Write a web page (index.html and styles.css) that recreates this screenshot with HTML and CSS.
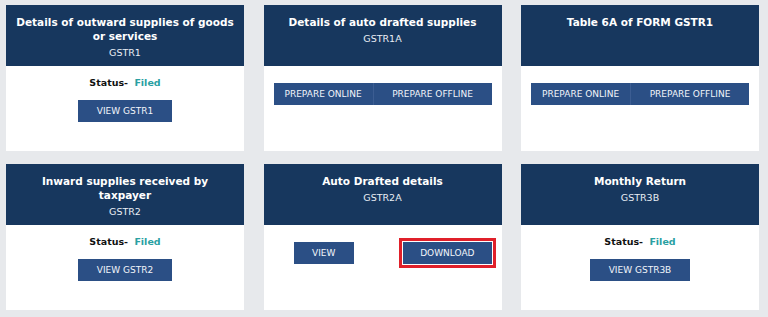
FILE: index.html
```html
<!DOCTYPE html>
<html lang="en">

<head>
    <meta charset="utf-8" />
    <title>Returns Dashboard</title>
    <link rel="stylesheet" href="styles.css">
</head>

<body>
    <div class="Dashboard">
        <div class="Tile">
            <div class="TileHeader">
                <div class="TileTitle">Details of outward supplies of goods or services</div>
                <div class="TileForm">GSTR1</div>
            </div>
            <div class="TileBody">
                <div class="Status">Status- <span class="Filed">Filed</span></div>
                <button class="Btn">VIEW GSTR1</button>
            </div>
        </div>
        <div class="Tile">
            <div class="TileHeader">
                <div class="TileTitle">Details of auto drafted supplies</div>
                <div class="TileForm">GSTR1A</div>
            </div>
            <div class="TileBody TileBody--actions">
                <div class="BtnGroup">
                    <button class="Btn BtnGroupFirst">PREPARE ONLINE</button>
                    <button class="Btn BtnGroupLast">PREPARE OFFLINE</button>
                </div>
            </div>
        </div>
        <div class="Tile">
            <div class="TileHeader">
                <div class="TileTitle">Table 6A of FORM GSTR1</div>
            </div>
            <div class="TileBody TileBody--actions">
                <div class="BtnGroup">
                    <button class="Btn BtnGroupFirst">PREPARE ONLINE</button>
                    <button class="Btn BtnGroupLast">PREPARE OFFLINE</button>
                </div>
            </div>
        </div>
        <div class="Tile">
            <div class="TileHeader">
                <div class="TileTitle">Inward supplies received by taxpayer</div>
                <div class="TileForm">GSTR2</div>
            </div>
            <div class="TileBody">
                <div class="Status">Status- <span class="Filed">Filed</span></div>
                <button class="Btn">VIEW GSTR2</button>
            </div>
        </div>
        <div class="Tile">
            <div class="TileHeader">
                <div class="TileTitle">Auto Drafted details</div>
                <div class="TileForm">GSTR2A</div>
            </div>
            <div class="TileBody TileBody--actions">
                <div class="SplitActions">
                    <button class="Btn">VIEW</button>
                    <button class="Btn Highlight">DOWNLOAD</button>
                </div>
            </div>
        </div>
        <div class="Tile">
            <div class="TileHeader">
                <div class="TileTitle">Monthly Return</div>
                <div class="TileForm">GSTR3B</div>
            </div>
            <div class="TileBody">
                <div class="Status">Status- <span class="Filed">Filed</span></div>
                <button class="Btn">VIEW GSTR3B</button>
            </div>
        </div>
    </div>
</body>

</html>
```

FILE: styles.css
```css
html,
body {
    margin: 0;
    padding: 0;
    background: #e7e9ec;
    font-family: "DejaVu Sans", Verdana, sans-serif;
}

.Dashboard {
    display: grid;
    grid-template-columns: repeat(3, 238px);
    grid-auto-rows: 146px;
    gap: 13px 19.5px;
    padding: 5px 0 0 6px;
}

.Tile {
    display: flex;
    flex-direction: column;
    background: #ffffff;
}

.TileHeader {
    box-sizing: border-box;
    height: 61px;
    padding: 10px 9px 0 9px;
    background: #17375e;
    color: #ffffff;
    text-align: center;
}

.TileTitle {
    font-size: 10.5px;
    font-weight: bold;
    line-height: 14px;
}

.TileForm {
    margin-top: 3px;
    font-size: 9.5px;
    line-height: 14px;
    color: #e9eef5;
}

.TileBody {
    padding: 11px 10px 0 10px;
    text-align: center;
}

.TileBody--actions {
    padding-top: 17px;
}

.Status {
    font-size: 9.5px;
    font-weight: bold;
    line-height: 12px;
    color: #111111;
    margin-bottom: 10px;
}

.Filed {
    margin-left: 3px;
    color: #2aa0a2;
}

.Btn {
    height: 22px;
    padding: 0 18.5px;
    border: none;
    border-radius: 0;
    background: #2b4f85;
    color: #f2f5fa;
    font-family: "DejaVu Sans", Verdana, sans-serif;
    font-size: 9px;
    line-height: 22px;
    cursor: pointer;
}

.BtnGroup {
    display: flex;
}

.BtnGroupFirst {
    padding: 0 11px;
}

.BtnGroupLast {
    flex: 1;
    padding: 0;
    border-left: 1px solid #3c5d92;
}

.SplitActions {
    display: flex;
    justify-content: space-between;
    padding-left: 20px;
}

.Highlight {
    padding: 0 17px;
    outline: 3px solid #e0202a;
    outline-offset: 1px;
}
```
